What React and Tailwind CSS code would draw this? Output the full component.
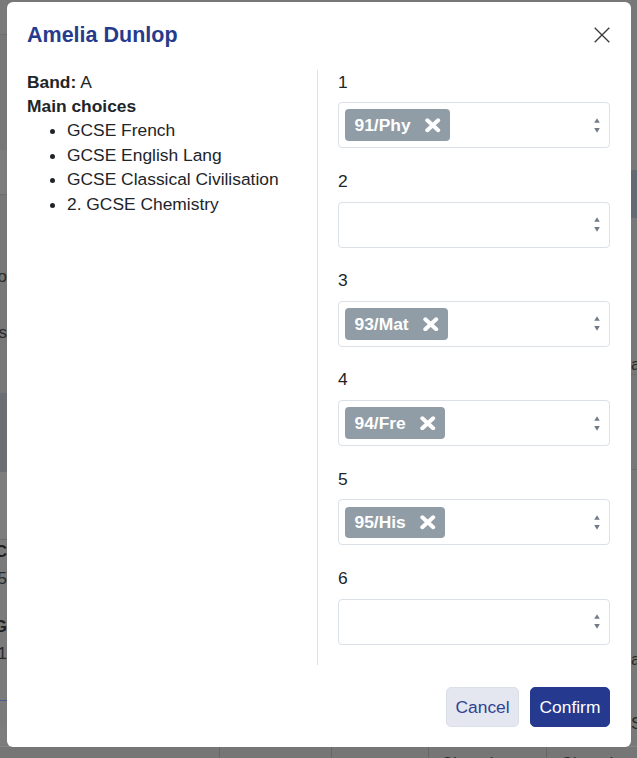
import React from "react";

const font = "font-['Liberation_Sans',Arial,Helvetica,sans-serif]";

function Arrows() {
  return (
    <svg width="6" height="15" viewBox="0 0 6 15" className="shrink-0">
      <polygon points="0.2,4.8 3,0.2 5.8,4.8" fill="#6f7b88" />
      <polygon points="0.2,10 5.8,10 3,14.8" fill="#6f7b88" />
    </svg>
  );
}

function ChipX() {
  return (
    <svg width="15.5" height="14.5" viewBox="0 0 15.5 14.5" className="shrink-0">
      <line x1="2.3" y1="2.3" x2="13.2" y2="12.2" stroke="#ffffff" strokeWidth="4" strokeLinecap="round" />
      <line x1="13.2" y1="2.3" x2="2.3" y2="12.2" stroke="#ffffff" strokeWidth="4" strokeLinecap="round" />
    </svg>
  );
}

function Choice({ label, value }) {
  return (
    <div className="mb-[20.5px]">
      <div className="h-[24.4px] leading-[24.4px] mb-[8.4px]">{label}</div>
      <div className="h-[46px] border border-[#dbe1e7] rounded-[4px] flex items-center justify-between pl-[5.5px] pr-[9px]">
        {value ? (
          <div className="h-[31.7px] rounded-[4px] bg-[#919da6] text-white font-bold flex items-center pl-[10px] pr-[9.5px]">
            <span>{value}</span>
            <span className="ml-[14.5px] flex items-center">
              <ChipX />
            </span>
          </div>
        ) : (
          <div />
        )}
        <Arrows />
      </div>
    </div>
  );
}

function Frag({ text, bold, top, color = "#2a2a2a" }) {
  return (
    <div
      className={`h-[24px] overflow-hidden flex justify-end whitespace-nowrap text-[17px] leading-[24px] ${bold ? "font-bold" : ""}`}
      style={{ marginTop: top, color }}
    >
      {text}
    </div>
  );
}

export default function App() {
  const choices = [
    { label: "1", value: "91/Phy" },
    { label: "2", value: null },
    { label: "3", value: "93/Mat" },
    { label: "4", value: "94/Fre" },
    { label: "5", value: "95/His" },
    { label: "6", value: null },
  ];

  return (
    <div className={`relative w-full h-[758px] overflow-hidden bg-[#787878] ${font}`}>
      {/* dimmed page behind the modal */}
      <div className="flex flex-col h-full">
        <div className="flex-1 flex">
          <div className="w-[7px] flex flex-col">
            <div className="h-[35px] border-b border-[#6d6d6d] bg-[#7a7a7a]" />
            <div className="h-[115px] bg-[#777777]" />
            <div className="h-[45px] bg-[#7c7c7c] border-b border-[#6d6d6d]" />
            <div className="h-[198px] bg-[#777777] flex flex-col">
              <Frag text="Do" top="70px" />
              <Frag text="ss" top="32px" />
            </div>
            <div className="h-[79px] bg-[#6b6e72]" />
            <div className="h-[68px] bg-[#7d7d7d] border-b border-[#6d6d6d]" />
            <div className="h-[160px] bg-[#7a7a7a] flex flex-col">
              <Frag text="DC" bold top="0px" color="#1f1f1f" />
              <Frag text="15" top="3px" />
              <Frag text="GG" bold top="24px" color="#1f1f1f" />
              <Frag text="11" top="3px" />
            </div>
            <div className="h-[25px] bg-[#7a7a7a] border-t border-[#4a5a90]" />
            <div className="flex-1 bg-[#7c7c7c]" />
          </div>
          <div className="flex-1" />
          <div className="w-[6px] flex flex-col">
            <div className="h-[170px] bg-[#787878]" />
            <div className="h-[48px] bg-[#636a74]" />
            <div className="h-[157px] bg-[#787878] border-b border-[#6d6d6d] flex flex-col">
              <div className="mt-[140px] text-[17px] leading-[14px] text-[#2a2a2a] whitespace-nowrap">a</div>
            </div>
            <div className="h-[95px] bg-[#787878] border-b border-[#6d6d6d]" />
            <div className="flex-1 bg-[#787878] flex flex-col">
              <div className="mt-[183px] text-[17px] leading-[14px] text-[#2a2a2a] whitespace-nowrap">a</div>
              <div className="mt-[50px] text-[17px] leading-[14px] text-[#2a2a2a] whitespace-nowrap">S</div>
            </div>
          </div>
        </div>
        <div className="h-[12px] flex bg-[#767676] border-t border-[#858585] text-[17px] leading-[34px] text-[#2a2a2a] overflow-hidden">
          <div className="w-[230px]" />
          <div className="w-[117px] border-l border-[#666666]" />
          <div className="w-[102px] border-l border-[#666666]" />
          <div className="w-[124px] border-l border-[#666666] pl-[12px] whitespace-nowrap">Chocolate</div>
          <div className="flex-1 border-l border-[#666666] pl-[13px] whitespace-nowrap">Chocolate</div>
        </div>
      </div>

      {/* modal */}
      <div className="absolute left-[7px] top-[2px] w-[624px] h-[745px] bg-white rounded-[6px] flex flex-col text-[#212529] text-[17.4px] leading-[24.4px]">
        <div className="flex items-start justify-between pl-[20px] pr-[21px] pt-[20px]">
          <h5 className="text-[21.5px] leading-[26px] font-bold text-[#273b8d]">Amelia Dunlop</h5>
          <button className="mt-[4.7px] w-[16px] h-[16px] flex items-center justify-center">
            <svg width="16" height="16" viewBox="0 0 16 16">
              <line x1="0.7" y1="0.7" x2="15.3" y2="15.3" stroke="#3a3a3a" strokeWidth="1.3" />
              <line x1="15.3" y1="0.7" x2="0.7" y2="15.3" stroke="#3a3a3a" strokeWidth="1.3" />
            </svg>
          </button>
        </div>

        <div className="flex pl-[20px] pr-[21px] mt-[21.5px]">
          <div className="w-[291px] border-r border-[#dee2e6]">
            <div>
              <span className="font-bold">Band:</span> A
            </div>
            <div className="font-bold">Main choices</div>
            <ul className="list-disc pl-[40px]">
              <li>GCSE French</li>
              <li>GCSE English Lang</li>
              <li>GCSE Classical Civilisation</li>
              <li>2. GCSE Chemistry</li>
            </ul>
          </div>
          <div className="flex-1 pl-[20px]">
            {choices.map((c) => (
              <Choice key={c.label} label={c.label} value={c.value} />
            ))}
          </div>
        </div>

        <div className="flex justify-end gap-[10.7px] pl-[20px] pr-[21px] pt-[22px]">
          <button className="border border-[#dadfea] bg-[#e4e7f0] text-[#2f4291] rounded-[5px] px-[8.6px] py-[6.5px] leading-[24.4px]">
            Cancel
          </button>
          <button className="border border-[#253a8e] bg-[#253a8e] text-white rounded-[5px] px-[8.6px] py-[6.5px] leading-[24.4px]">
            Confirm
          </button>
        </div>
      </div>
    </div>
  );
}
